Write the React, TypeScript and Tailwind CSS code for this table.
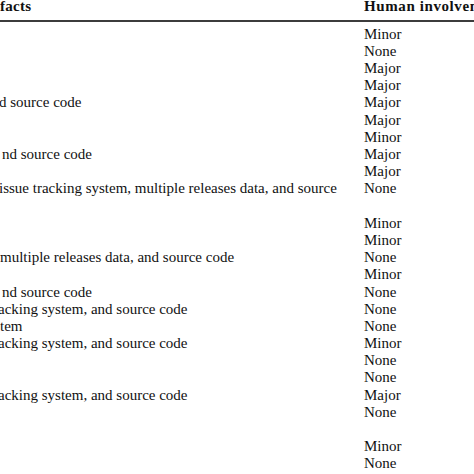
import React from "react";

type Row = {
  artifact?: string;
  shift?: string;
  human?: string;
};

// left column text is clipped by the page edge, shift pulls each line left a bit
const rows: Row[] = [
  { human: "Minor" },
  { human: "None" },
  { human: "Major" },
  { human: "Major" },
  { artifact: "d source code", shift: "-ml-[1px]", human: "Major" },
  { human: "Major" },
  { human: "Minor" },
  { artifact: "nd source code", shift: "ml-[2px]", human: "Major" },
  { human: "Major" },
  { artifact: "issue tracking system, multiple releases data, and source", shift: "-ml-[1px]", human: "None" },
  {},
  { human: "Minor" },
  { human: "Minor" },
  { artifact: "multiple releases data, and source code", shift: "ml-0", human: "None" },
  { human: "Minor" },
  { artifact: "nd source code", shift: "ml-[2px]", human: "None" },
  { artifact: "acking system, and source code", shift: "-ml-[2px]", human: "None" },
  { artifact: "tem", shift: "ml-0", human: "None" },
  { artifact: "acking system, and source code", shift: "-ml-[2px]", human: "Minor" },
  { human: "None" },
  { human: "None" },
  { artifact: "acking system, and source code", shift: "-ml-[2px]", human: "Major" },
  { human: "None" },
  {},
  { human: "Minor" },
  { human: "None" },
];

export default function App() {
  return (
    <div
      className="w-[474px] h-[474px] overflow-hidden bg-white text-[#111] text-[15px] leading-[17.2px]"
      style={{ fontFamily: '"Liberation Serif", "Times New Roman", serif' }}
    >
      <div className="-mt-[2px] flex font-bold whitespace-nowrap">
        <div className="w-[364px] shrink-0 tracking-[0.3px]">facts</div>
        <div className="tracking-[0.6px]">Human involvement</div>
      </div>
      <div className="mt-[5px] h-[1.5px] bg-[#3c3c3c]" />
      <div className="mt-[4px] flex flex-col">
        {rows.map((r, i) => (
          <div key={i} className="flex h-[17.2px] whitespace-nowrap">
            <div className="w-[364px] shrink-0 overflow-hidden">
              {r.artifact && <span className={`block ${r.shift}`}>{r.artifact}</span>}
            </div>
            <div>{r.human}</div>
          </div>
        ))}
      </div>
    </div>
  );
}
